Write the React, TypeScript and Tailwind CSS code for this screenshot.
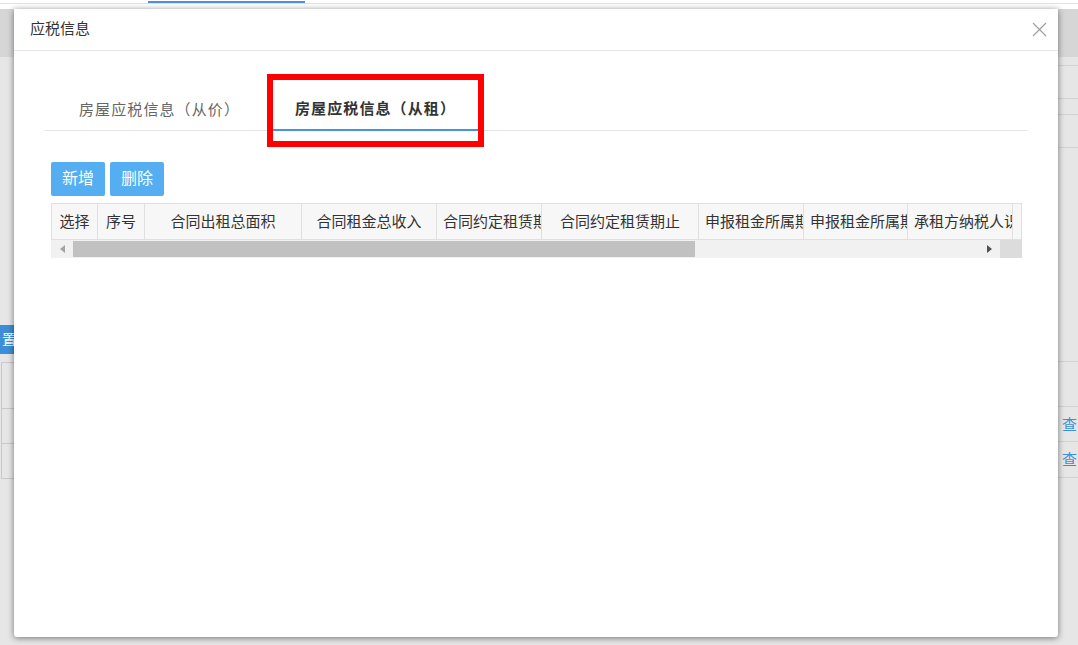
import React from "react";

const font = { fontFamily: '"Liberation Sans", "Noto Sans CJK SC", sans-serif' };

const columns: { label: string; w: string }[] = [
  { label: "选择", w: "w-[46px]" },
  { label: "序号", w: "w-[47px]" },
  { label: "合同出租总面积", w: "w-[157px]" },
  { label: "合同租金总收入", w: "w-[135px]" },
  { label: "合同约定租赁期起", w: "w-[105px]" },
  { label: "合同约定租赁期止", w: "w-[157px]" },
  { label: "申报租金所属期起", w: "w-[105px]" },
  { label: "申报租金所属期止", w: "w-[104px]" },
  { label: "承租方纳税人识别号", w: "w-[105px]" },
];

function CloseIcon() {
  return (
    <svg width="15" height="15" viewBox="0 0 15 15" fill="none" stroke="#a0a0a0" strokeWidth="1.2">
      <path d="M1 1L14 14M14 1L1 14" />
    </svg>
  );
}

function BackdropLeft() {
  return (
    <div className="w-[14px] flex-shrink-0 flex flex-col overflow-hidden">
      <div className="h-[48px] bg-[#d6d6d6]" />
      <div className="h-[268px]" />
      <div className="h-[29px] bg-[#3d8ed8] flex items-center justify-end overflow-hidden">
        <span className="text-[15px] text-white leading-none whitespace-nowrap -mr-[3px]">置</span>
      </div>
      <div className="h-[8px]" />
      <div className="ml-[1px] border-l border-t border-[#c9c9c9] h-[46px]" />
      <div className="ml-[1px] border-l border-t border-[#c9c9c9] h-[35px]" />
      <div className="ml-[1px] border-l border-t border-b border-[#c9c9c9] h-[36px]" />
    </div>
  );
}

function BackdropRight() {
  return (
    <div className="w-[20px] flex-shrink-0 flex flex-col overflow-hidden">
      <div className="h-[48px] bg-[#d6d6d6]" />
      <div className="h-[9px] border-b border-[#d2d2d2]" />
      <div className="h-[33px] border-b border-[#d2d2d2]" />
      <div className="h-[16px] border-b border-[#d2d2d2]" />
      <div className="h-[33px] border-b border-[#d2d2d2]" />
      <div className="h-[214px] border-b border-[#d2d2d2]" />
      <div className="h-[45px] border-b border-[#d2d2d2]" />
      <div className="h-[35px] border-b border-[#d2d2d2] flex items-center pl-[4px]">
        <span className="text-[15px] text-[#3d8ed8] leading-none">查</span>
      </div>
      <div className="h-[36px] border-b border-[#d2d2d2] flex items-center pl-[4px]">
        <span className="text-[15px] text-[#3d8ed8] leading-none">查</span>
      </div>
    </div>
  );
}

export default function App() {
  return (
    <div className="w-[1078px] h-[645px] bg-white flex flex-col overflow-hidden text-[#333]" style={font}>
      {/* page top strip */}
      <div className="h-[4px] flex-shrink-0 border-b border-[#e2e2e2] relative">
        <div className="absolute left-[148px] top-[1px] w-[157px] h-[2px] bg-[#4a8fe8]" />
      </div>
      <div className="h-[5px] flex-shrink-0" />

      {/* dimmed page with dialog */}
      <div className="flex-1 flex bg-[#e6e6e6]">
        <BackdropLeft />

        <div className="w-[1044px] h-[628px] flex-shrink-0 bg-white rounded-b-[3px] shadow-[0_1px_6px_rgba(0,0,0,0.5)] flex flex-col relative">
          {/* header */}
          <div className="h-[42px] flex-shrink-0 border-b border-[#e5e5e5] flex items-center justify-between pl-[16px] pr-[11px]">
            <span className="text-[15px] text-[#333]">应税信息</span>
            <CloseIcon />
          </div>

          {/* body */}
          <div className="px-[31px] pt-[36px]">
            <div className="h-[44px] border-b border-[#e4e4e4] flex">
              <div className="ml-[11px] px-[23px] pt-[3px] flex items-center text-[15px] tracking-[1.1px] text-[#666] whitespace-nowrap">
                房屋应税信息（从价）
              </div>
              <div className="ml-[10px] px-[22px] pt-[3px] flex items-center text-[15px] tracking-[1.1px] font-bold text-[#333] whitespace-nowrap border-b-2 border-[#4a8fe8] -mb-px">
                房屋应税信息（从租）
              </div>
            </div>

            <div className="pl-[6px] pt-[31px]">
              <div className="flex gap-[5px]">
                <button className="w-[54px] h-[34px] rounded-[2px] bg-[#55adf2] text-white text-[16px]">新增</button>
                <button className="w-[54px] h-[34px] rounded-[2px] bg-[#55adf2] text-white text-[16px]">删除</button>
              </div>

              <div className="mt-[7px] w-[971px]">
                <div className="h-[37px] flex border border-[#e0e0e0] bg-[#f7f7f7]">
                  {columns.map((c) => (
                    <div
                      key={c.label}
                      className={`${c.w} flex-shrink-0 border-r border-[#e0e0e0] px-[6px] text-center overflow-hidden whitespace-nowrap text-[15px] leading-[35px] text-[#333]`}
                    >
                      {c.label}
                    </div>
                  ))}
                  <div className="flex-1" />
                </div>

                {/* horizontal scrollbar */}
                <div className="h-[18px] flex bg-[#f1f1f1]">
                  <div className="w-[22px] flex items-center justify-center">
                    <svg width="5" height="8" viewBox="0 0 5 8"><path d="M5 0L0 4L5 8Z" fill="#a3a3a3" /></svg>
                  </div>
                  <div className="w-[622px] my-[1px] bg-[#c1c1c1]" />
                  <div className="flex-1" />
                  <div className="w-[22px] flex items-center justify-center">
                    <svg width="5" height="8" viewBox="0 0 5 8"><path d="M0 0L5 4L0 8Z" fill="#505050" /></svg>
                  </div>
                  <div className="w-[22px] bg-[#dcdcdc]" />
                </div>
              </div>
            </div>
          </div>

          {/* annotation */}
          <div className="absolute left-[253px] top-[65px] w-[217px] h-[73px] border-[6px] border-[#ff0000]" />
        </div>

        <BackdropRight />
      </div>
    </div>
  );
}
